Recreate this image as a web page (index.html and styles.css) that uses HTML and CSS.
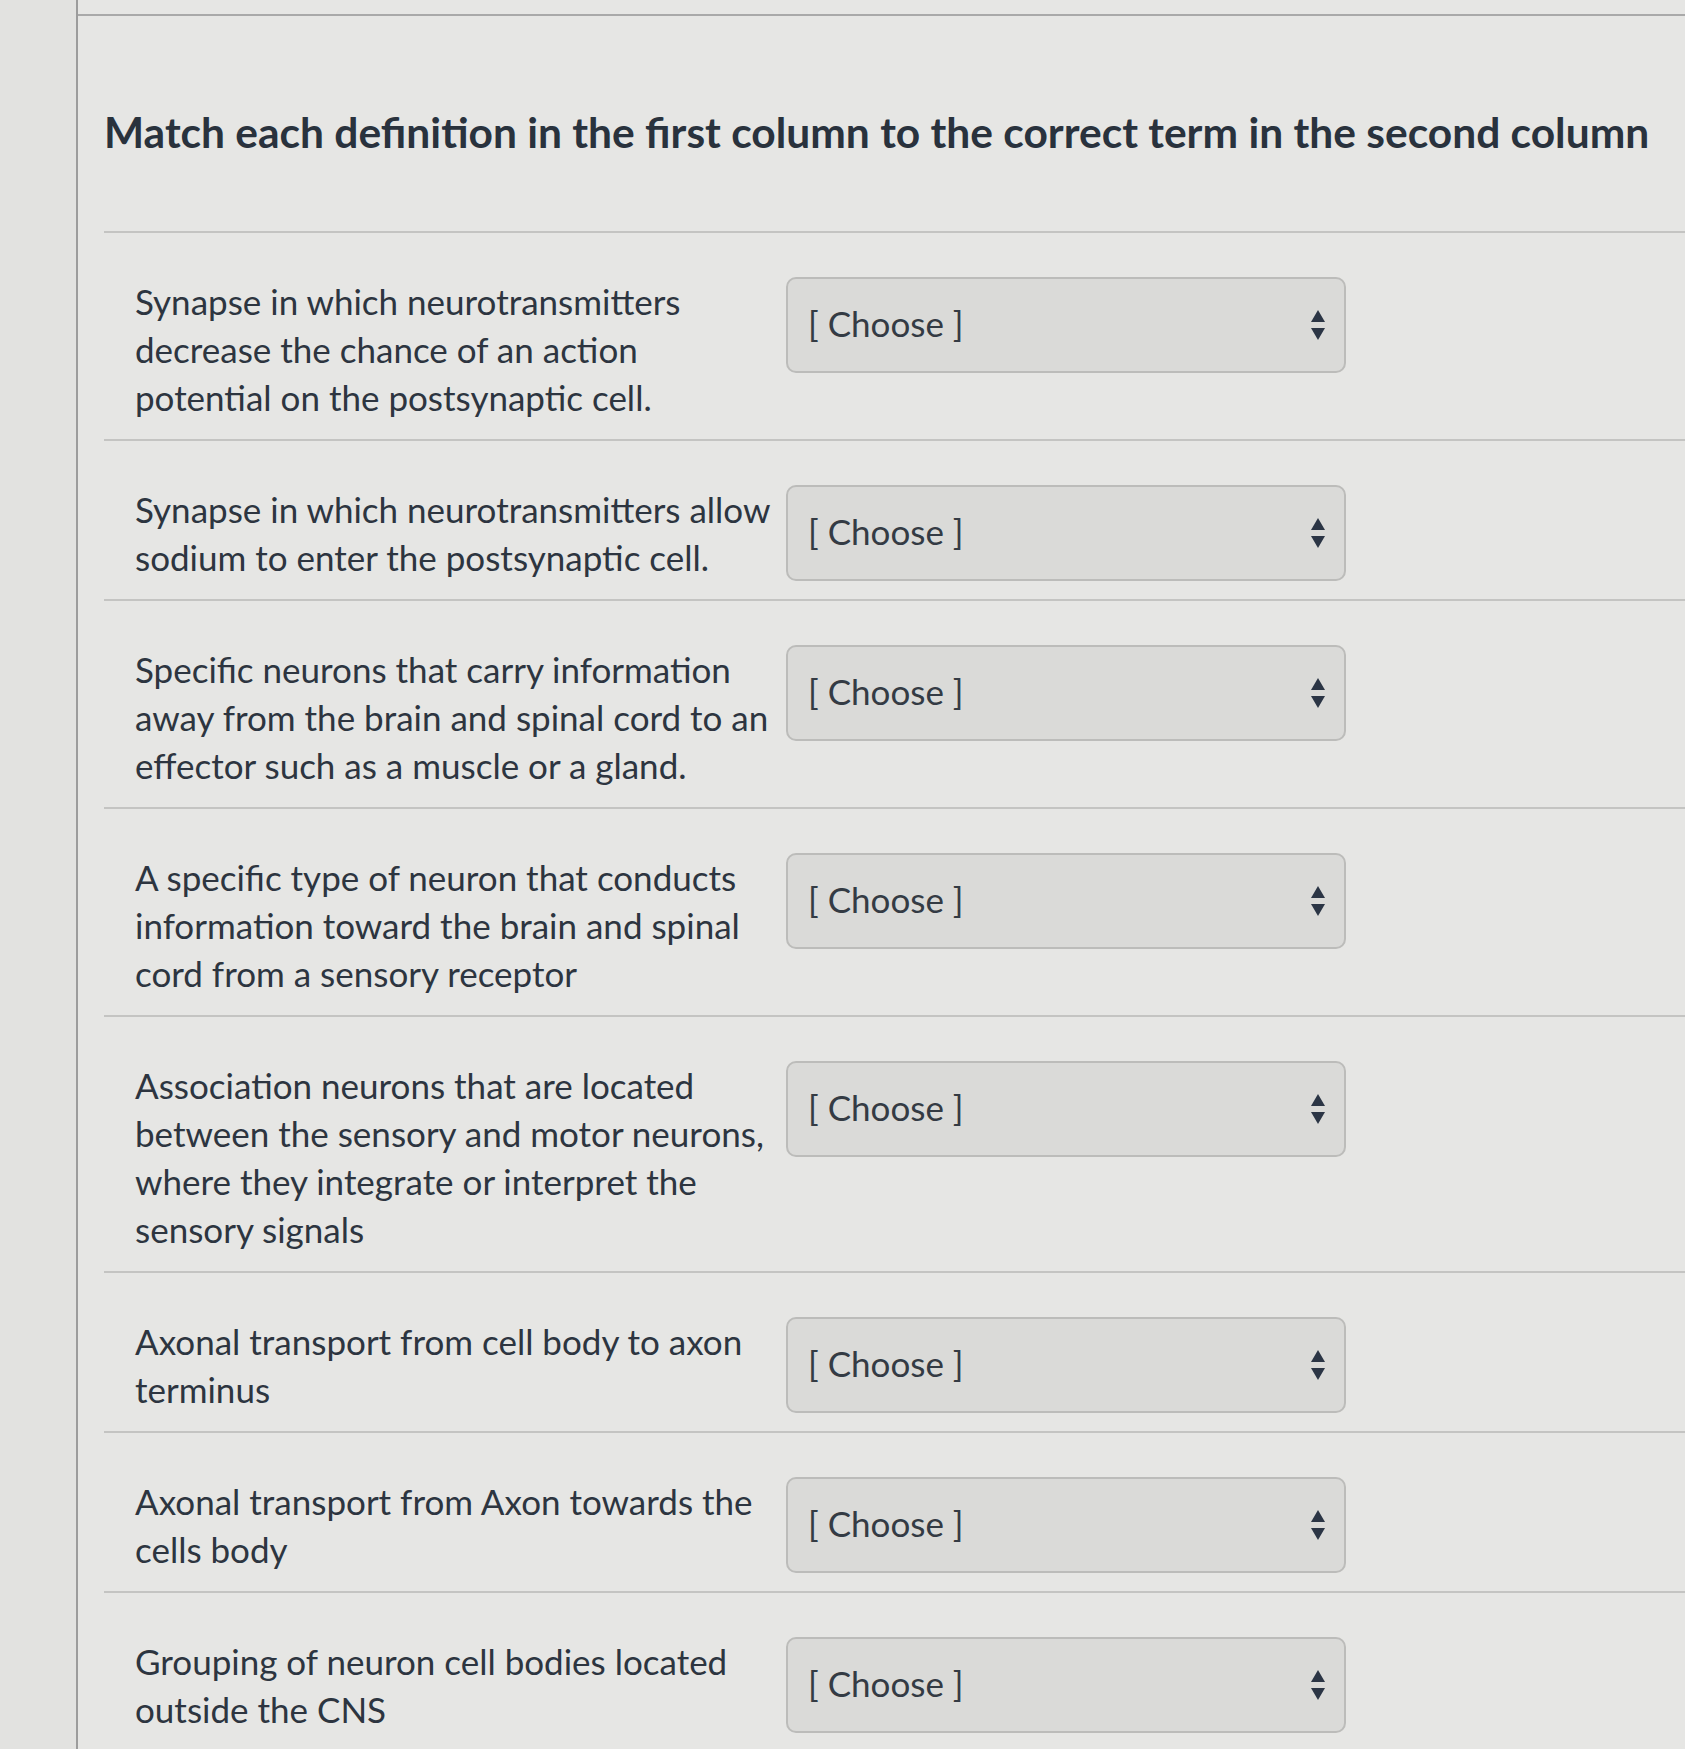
FILE: index.html
```html
<!DOCTYPE html>
<html lang="en">
<head>
    <meta charset="UTF-8">
    <title>Matching Question</title>
    <link rel="stylesheet" href="styles.css">
</head>
<body>
    <div class="side-nav"></div>

    <div class="page">
        <div class="top-bar"></div>

        <div class="question">
            <h1 class="question-title">Match each definition in the first column to the correct term in the second column</h1>

            <div class="match-list">
                <div class="match-row">
                    <div class="definition">Synapse in which neurotransmitters<br>decrease the chance of an action<br>potential on the postsynaptic cell.</div>
                    <div class="term-select">
                        <span>[ Choose ]</span>
                        <svg class="select-arrows" viewBox="0 0 16 32"><path d="M8 1 L15 13 L1 13 Z"/><path d="M1 19 L15 19 L8 31 Z"/></svg>
                    </div>
                </div>

                <div class="match-row">
                    <div class="definition">Synapse in which neurotransmitters allow<br>sodium to enter the postsynaptic cell.</div>
                    <div class="term-select">
                        <span>[ Choose ]</span>
                        <svg class="select-arrows" viewBox="0 0 16 32"><path d="M8 1 L15 13 L1 13 Z"/><path d="M1 19 L15 19 L8 31 Z"/></svg>
                    </div>
                </div>

                <div class="match-row">
                    <div class="definition">Specific neurons that carry information<br>away from the brain and spinal cord to an<br>effector such as a muscle or a gland.</div>
                    <div class="term-select">
                        <span>[ Choose ]</span>
                        <svg class="select-arrows" viewBox="0 0 16 32"><path d="M8 1 L15 13 L1 13 Z"/><path d="M1 19 L15 19 L8 31 Z"/></svg>
                    </div>
                </div>

                <div class="match-row">
                    <div class="definition">A specific type of neuron that conducts<br>information toward the brain and spinal<br>cord from a sensory receptor</div>
                    <div class="term-select">
                        <span>[ Choose ]</span>
                        <svg class="select-arrows" viewBox="0 0 16 32"><path d="M8 1 L15 13 L1 13 Z"/><path d="M1 19 L15 19 L8 31 Z"/></svg>
                    </div>
                </div>

                <div class="match-row">
                    <div class="definition">Association neurons that are located<br>between the sensory and motor neurons,<br>where they integrate or interpret the<br>sensory signals</div>
                    <div class="term-select">
                        <span>[ Choose ]</span>
                        <svg class="select-arrows" viewBox="0 0 16 32"><path d="M8 1 L15 13 L1 13 Z"/><path d="M1 19 L15 19 L8 31 Z"/></svg>
                    </div>
                </div>

                <div class="match-row">
                    <div class="definition">Axonal transport from cell body to axon<br>terminus</div>
                    <div class="term-select">
                        <span>[ Choose ]</span>
                        <svg class="select-arrows" viewBox="0 0 16 32"><path d="M8 1 L15 13 L1 13 Z"/><path d="M1 19 L15 19 L8 31 Z"/></svg>
                    </div>
                </div>

                <div class="match-row">
                    <div class="definition">Axonal transport from Axon towards the<br>cells body</div>
                    <div class="term-select">
                        <span>[ Choose ]</span>
                        <svg class="select-arrows" viewBox="0 0 16 32"><path d="M8 1 L15 13 L1 13 Z"/><path d="M1 19 L15 19 L8 31 Z"/></svg>
                    </div>
                </div>

                <div class="match-row">
                    <div class="definition">Grouping of neuron cell bodies located<br>outside the CNS</div>
                    <div class="term-select">
                        <span>[ Choose ]</span>
                        <svg class="select-arrows" viewBox="0 0 16 32"><path d="M8 1 L15 13 L1 13 Z"/><path d="M1 19 L15 19 L8 31 Z"/></svg>
                    </div>
                </div>
            </div>
        </div>
    </div>
</body>
</html>
```

FILE: styles.css
```css
body {
    margin: 0;
    display: flex;
    min-height: 100vh;
    font-family: Lato, "Liberation Sans", sans-serif;
    color: #2d3540;
    background-color: #e6e6e4;
    overflow: hidden;
}

/* 左侧导航条 */
.side-nav {
    width: 76px;
    flex-shrink: 0;
    background-color: #e2e2e0;
    border-right: 2px solid #9c9c9c;
}

.page {
    flex: 1;
    display: flex;
    flex-direction: column;
}

.top-bar {
    height: 14px;
    border-bottom: 2px solid #a9a9a9;
}

.question {
    padding-left: 26px;
}

.question-title {
    margin: 90px 0 73px 0;
    font-size: 42.5px;
    font-weight: 700;
    line-height: 52px;
    white-space: nowrap;
    color: #29323d;
}

.match-list {
    border-top: 2px solid #c4c4c2;
}

.match-row {
    display: flex;
    align-items: flex-start;
    gap: 6px;
    padding: 44px 0 18px 31px;
    border-bottom: 2px solid #c4c4c2;
}

.definition {
    width: 645px;
    flex-shrink: 0;
    font-size: 35px;
    line-height: 48px;
    white-space: nowrap;
}

/* 下拉选择框 */
.term-select {
    width: 560px;
    height: 96px;
    box-sizing: border-box;
    display: flex;
    align-items: center;
    justify-content: space-between;
    padding: 0 18px 0 20px;
    background-color: #dadad8;
    border: 2px solid #bcbcba;
    border-radius: 10px;
    font-size: 35px;
    color: #343b44;
}

.term-select span {
    margin-top: -4px;
}

.select-arrows {
    width: 16px;
    height: 32px;
    fill: #2b3545;
}
```
